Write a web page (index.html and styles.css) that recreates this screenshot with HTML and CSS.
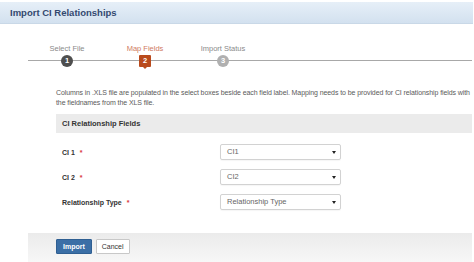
FILE: index.html
```html
<!DOCTYPE html>
<html>
<head>
<meta charset="utf-8">
<link rel="stylesheet" href="styles.css">
</head>
<body>
<div class="header">Import CI Relationships</div>
<div class="steps">
  <div class="step done"><span class="slabel">Select File</span><span class="marker">1</span></div>
  <div class="step active"><span class="slabel">Map Fields</span><span class="marker">2</span></div>
  <div class="step todo"><span class="slabel">Import Status</span><span class="marker">3</span></div>
</div>
<div class="content">
  <p class="intro">Columns in .XLS file are populated in the select boxes beside each field label. Mapping needs to be provided for CI relationship fields with the fieldnames from the XLS file.</p>
  <div class="section">CI Relationship Fields</div>
  <div class="row"><span class="label">CI 1 <span class="req">*</span></span><span class="select">CI1<span class="arrow"></span></span></div>
  <div class="row"><span class="label">CI 2 <span class="req">*</span></span><span class="select">CI2<span class="arrow"></span></span></div>
  <div class="row"><span class="label">Relationship Type <span class="req">*</span></span><span class="select">Relationship Type<span class="arrow"></span></span></div>
</div>
<div class="footer">
  <span class="btn primary">Import</span>
  <span class="btn">Cancel</span>
</div>
</body>
</html>
```
FILE: styles.css
```css
html, body { margin: 0; padding: 0; background: #fff; }
body {
  font-family: "Liberation Sans", Arial, sans-serif;
  width: 474px;
  height: 262px;
  overflow: hidden;
}
.header {
  margin-top: 2px;
  width: 463px;
  height: 21px;
  padding-left: 10px;
  line-height: 21px;
  font-size: 9.5px;
  font-weight: bold;
  color: #34496f;
  background: linear-gradient(#e6eff8, #d3e1ef);
  border-bottom: 1px solid #c9d8e7;
}
.steps {
  display: flex;
  margin: 20px 0 0 28px;
  width: 444px;
  height: 24px;
  background: linear-gradient(#a8a8a8, #a8a8a8) no-repeat 0 16px / 100% 1px;
}
.step {
  width: 78px;
  display: flex;
  flex-direction: column;
  align-items: center;
}
.slabel {
  font-size: 7.5px;
  line-height: 10px;
  color: #8a8a8a;
  white-space: nowrap;
}
.active .slabel { color: #cf7a62; }
.marker {
  margin-top: 1px;
  width: 12px;
  height: 12px;
  border-radius: 50%;
  font-size: 7.5px;
  font-weight: bold;
  line-height: 12px;
  text-align: center;
  color: #fff;
  background: #4e4e4e;
  position: relative;
}
.todo .marker { background: #b0b0b0; }
.active .marker {
  border-radius: 1px;
  background: #b94a1c;
}
.active .marker::after {
  content: "";
  position: absolute;
  left: 4px;
  top: 12px;
  border-left: 2px solid transparent;
  border-right: 2px solid transparent;
  border-top: 2px solid #b94a1c;
}
.content {
  margin-left: 56px;
  width: 416px;
}
.intro {
  margin: 20px 0 0;
  max-width: 415px;
  font-size: 7px;
  letter-spacing: -0.09px;
  line-height: 10px;
  color: #5a5a5a;
}
.section {
  margin-top: 6px;
  height: 19px;
  line-height: 19px;
  padding-left: 6px;
  background: #ebebeb;
  font-size: 7.5px;
  font-weight: bold;
  color: #333;
}
.row {
  display: flex;
  align-items: center;
  height: 16px;
  margin-top: 9px;
}
.section + .row { margin-top: 11px; }
.label {
  width: 158px;
  padding-left: 6px;
  font-size: 7px;
  font-weight: bold;
  color: #333;
}
.req { color: #d9363e; margin-left: 3px; }
.select {
  width: 113px;
  height: 14px;
  padding: 0 0 0 6px;
  border: 1px solid #d2d2d2;
  border-radius: 2px;
  font-size: 7.5px;
  line-height: 14px;
  color: #666;
  display: flex;
  justify-content: space-between;
  align-items: center;
  box-shadow: 0 1px 1px rgba(0,0,0,0.04);
}
.arrow {
  margin-right: 4px;
  border-left: 2px solid transparent;
  border-right: 2px solid transparent;
  border-top: 3px solid #222;
}
.footer {
  margin: 23px 0 0 28px;
  width: 416px;
  height: 28px;
  padding-left: 28px;
  padding-top: 6px;
  box-sizing: content-box;
  background: linear-gradient(#ebebeb, #f9f9f9);
  display: flex;
  gap: 4px;
  align-items: flex-start;
}
.btn {
  height: 13px;
  line-height: 13px;
  padding: 0 5px;
  font-size: 7px;
  color: #333;
  background: #fff;
  border: 1px solid #c8c8c8;
  border-radius: 1px;
}
.btn.primary {
  padding: 0 6px;
  background: #3b6fa6;
  border-color: #2f5f92;
  color: #fff;
  font-weight: bold;
}
```
